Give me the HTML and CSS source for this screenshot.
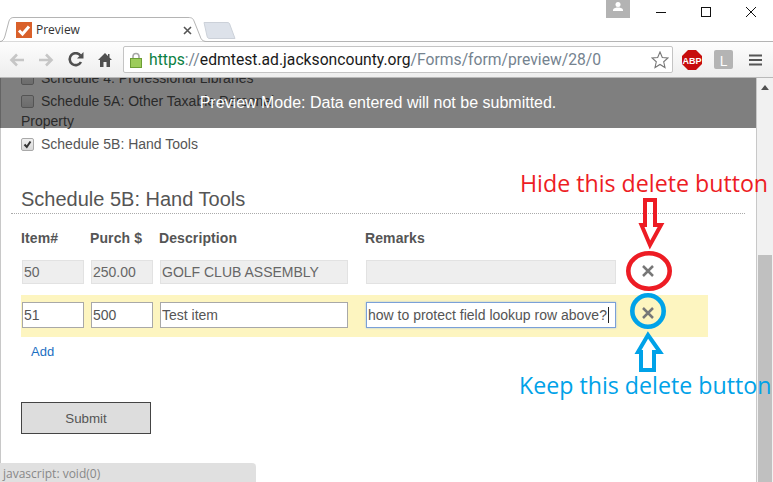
FILE: index.html
```html
<!DOCTYPE html>
<html lang="en">
<head>
<meta charset="utf-8">
<title>Preview</title>
<link rel="stylesheet" href="styles.css">
</head>
<body>
<div class="window">
  <header class="tabstrip">
    <div class="tab">
      <svg class="tab-shape" width="212" height="25" viewBox="0 0 212 25"><path d="M0 24.500H3C6 24.500 7 22 8 19L12 4C13 1.500 14 .5 17 .5H191C195 .5 196 1.500 197 4L203 19C204 22 205 24.500 210 24.500" fill="#fff" stroke="#b4b4b4"/></svg>
      <svg class="favicon" width="16" height="16" viewBox="0 0 16 16"><rect width="16" height="16" fill="#d9602a"/><path d="M3 8.500 6.500 12 13 4.500" fill="none" stroke="#fff" stroke-width="3"/></svg>
      <span class="tab-title">Preview</span>
      <svg class="tab-close" width="9" height="9" viewBox="0 0 9 9"><path d="M1 1 8 8M8 1 1 8" stroke="#555" stroke-width="1.600"/></svg>
    </div>
    <svg class="newtab" width="33" height="17" viewBox="0 0 33 17"><path d="M1 .5H24C26 .5 26.500 1 27 3L32 16.500H7C5 16.500 4.500 16 4 14Z" fill="#dde2ea" stroke="#ccd1d9"/></svg>
    <div class="spacer"></div>
    <div class="profile"><svg width="10" height="9" viewBox="0 0 10 9"><circle cx="5" cy="2.500" r="2.500" fill="#fff"/><path d="M0 9V7.500C1 6 3 5.500 5 5.500S9 6 10 7.500V9Z" fill="#fff"/></svg></div>
    <div class="winctl">
      <svg width="12" height="12" viewBox="0 0 12 12"><path d="M1 6.500H11" stroke="#111"/></svg>
      <svg width="12" height="12" viewBox="0 0 12 12"><rect x="1.500" y="1.500" width="9" height="9" fill="none" stroke="#111"/></svg>
      <svg width="12" height="12" viewBox="0 0 12 12"><path d="M1 1 11 11M11 1 1 11" stroke="#111"/></svg>
    </div>
  </header>

  <nav class="toolbar">
    <svg class="nav-icon" width="16" height="14" viewBox="0 0 16 14"><path d="M15 7H3M8 1.500 2.500 7 8 12.500" fill="none" stroke="#c6c6c6" stroke-width="2.600"/></svg>
    <svg class="nav-icon" width="16" height="14" viewBox="0 0 16 14"><path d="M1 7H13M8 1.500 13.500 7 8 12.500" fill="none" stroke="#c6c6c6" stroke-width="2.600"/></svg>
    <svg class="nav-icon" width="16" height="15" viewBox="0 0 16 15"><path d="M13 10A6 6 0 1 1 12.500 3.500" fill="none" stroke="#505050" stroke-width="2.600"/><path d="M9 6.500H15.500V0Z" fill="#505050"/></svg>
    <svg class="nav-icon" width="14" height="14" viewBox="0 0 14 14"><path d="M7 0 0 7H2V14H5.500V9H8.500V14H12V7H14L11.500 4.500V1H10V3Z" fill="#505050"/></svg>
    <div class="omnibox">
      <svg class="lock" width="12" height="16" viewBox="0 0 12 16"><path d="M3 7V4.500A3 3 0 0 1 9 4.500V7" fill="none" stroke="#a8a8a8" stroke-width="1.600"/><rect x=".5" y="6.500" width="11" height="9" fill="#9ccc5a" stroke="#6d9e35"/></svg>
      <span class="url"><span class="url-scheme">https</span><span class="url-dim">://</span><span class="url-host">edmtest.ad.jacksoncounty.org</span><span class="url-dim">/Forms/form/preview/28/0</span></span>
      <svg class="star" width="18" height="18" viewBox="0 0 18 18"><path d="M9 1 11.300 6.500 17 7 12.700 10.800 14 16.500 9 13.500 4 16.500 5.300 10.800 1 7 6.700 6.500Z" fill="#fff" stroke="#777" stroke-width="1.100"/></svg>
    </div>
    <svg class="ext-abp" width="20" height="20" viewBox="0 0 20 20"><path d="M6 0H14L20 6V14L14 20H6L0 14V6Z" fill="#c70d0d"/><text x="10" y="13.500" text-anchor="middle" class="abp-text">ABP</text></svg>
    <div class="ext-l">L</div>
    <svg class="menu" width="13" height="12" viewBox="0 0 13 12"><path d="M0 1.500H13M0 6H13M0 10.500H13" stroke="#555" stroke-width="2.200"/></svg>
  </nav>

  <main class="viewport">
    <div class="page">
      <div class="checks">
        <div class="check"><span class="box"></span><span>Schedule 4: Professional Libraries</span></div>
        <div class="check"><span class="box"></span><span class="check-wrap">Schedule 5A: Other Taxable Personal</span></div>
        <div class="check-rest">Property</div>
        <div class="check"><span class="box"><svg width="11" height="11" viewBox="0 0 11 11"><path d="M2.500 5.500 4.800 8 8.500 2.500" fill="none" stroke="#333" stroke-width="2"/></svg></span><span>Schedule 5B: Hand Tools</span></div>
      </div>

      <h2 class="section-title">Schedule 5B: Hand Tools</h2>

      <div class="grid grid-head">
        <div>Item#</div><div>Purch $</div><div>Description</div><div class="remarks-label">Remarks</div>
      </div>

      <div class="grid grid-locked">
        <input class="field locked" value="50" readonly>
        <input class="field locked" value="250.00" readonly>
        <input class="field locked" value="GOLF CLUB ASSEMBLY" readonly>
        <input class="field locked remarks" value="" readonly>
        <svg class="del" width="12" height="12" viewBox="0 0 12 12"><path d="M1 1 11 11M11 1 1 11" stroke="#777" stroke-width="2.500"/></svg>
      </div>

      <div class="grid grid-edit">
        <input class="field" value="51">
        <input class="field" value="500">
        <input class="field" value="Test item">
        <div class="remarks focus-field">how to protect field lookup row above?<span class="caret"></span></div>
        <svg class="del" width="12" height="12" viewBox="0 0 12 12"><path d="M1 1 11 11M11 1 1 11" stroke="#777" stroke-width="2.500"/></svg>
      </div>

      <a class="add" href="#">Add</a>
      <button class="submit" type="button">Submit</button>
    </div>
    <div class="scrollbar">
      <svg class="scroll-up" width="8" height="5" viewBox="0 0 8 5"><path d="M4 0 8 5H0Z" fill="#505050"/></svg>
      <div class="thumb"></div>
    </div>

    <div class="banner">Preview Mode: Data entered will not be submitted.</div>
    <div class="status">javascript: void(0)</div>
  </main>

  <div class="notes">
    <svg class="notes-art" width="773" height="482" viewBox="0 0 773 482">
      <path d="M645 200H655V225H661L650 245 641.500 225H645Z" fill="none" stroke="#ed1c24" stroke-width="4"/>
      <ellipse cx="649" cy="271" rx="20.700" ry="17.700" fill="none" stroke="#ed1c24" stroke-width="4.600"/>
      <circle cx="648" cy="311" r="15.700" fill="none" stroke="#00a2e8" stroke-width="4.600"/>
      <path d="M641 370H654V352H660L648 335 638 352H641Z" fill="none" stroke="#00a2e8" stroke-width="4"/>
    </svg>
    <span class="note note-hide">Hide this delete button</span>
    <span class="note note-keep">Keep this delete button</span>
  </div>
</div>
</body>
</html>
```
FILE: styles.css
```css
* { box-sizing: border-box; }
html, body { margin: 0; padding: 0; }
body { font-family: "Liberation Sans", Arial, sans-serif; background: #fff; }

.window {
  position: relative;
  width: 773px;
  height: 482px;
  overflow: hidden;
  display: flex;
  flex-direction: column;
  background: #fff;
}

/* Tab strip */
.tabstrip {
  height: 42px;
  flex: none;
  display: flex;
  align-items: flex-start;
  background: #fff;
  border-bottom: 1px solid #b4b4b4;
}
.tab {
  position: relative;
  width: 203px;
  height: 42px;
  flex: none;
  font-family: "Open Sans", sans-serif;
}
.tab-shape { position: absolute; left: -3px; top: 17px; }
.favicon { position: absolute; left: 16px; top: 22px; }
.tab-title { position: absolute; left: 36px; top: 21px; font-size: 12px; line-height: 18px; color: #333; }
.tab-close { position: absolute; left: 183px; top: 26px; }
.newtab { margin-top: 22px; flex: none; }
.spacer { flex: 1; }
.profile {
  width: 24px;
  height: 18px;
  background: #b3b3b3;
  display: flex;
  justify-content: center;
  padding-top: 2px;
  margin-right: 25px;
}
.winctl { display: flex; gap: 33px; padding: 6px 16px 0 0; }

/* Toolbar */
.toolbar {
  height: 36px;
  flex: none;
  display: flex;
  align-items: center;
  padding: 0 10px 0 9px;
  background: linear-gradient(#fdfdfd, #eeeeee);
  border-bottom: 1px solid #b9b9b9;
}
.nav-icon { flex: none; margin-right: 13px; }
.nav-icon:nth-child(3) { margin-left: 1px; margin-right: 14px; }
.omnibox {
  width: 550px;
  height: 27px;
  margin-left: -2px;
  flex: none;
  display: flex;
  align-items: center;
  background: #fff;
  border: 1px solid #c4c4c4;
  border-radius: 2px;
  padding: 0 3px 0 6px;
}
.lock { flex: none; margin-right: 7px; }
.url {
  flex: 1;
  font-family: Roboto, sans-serif;
  font-size: 15.700px;
  white-space: nowrap;
  overflow: hidden;
  color: #222;
}
.url-scheme { color: #0b8043; }
.url-dim { color: #75838f; }
.url-host { color: #1a1a1a; }
.star { flex: none; }
.ext-abp { flex: none; margin-left: 9px; }
.abp-text { font: bold 9px "Liberation Sans", sans-serif; fill: #fff; }
.ext-l {
  width: 19px;
  height: 19px;
  margin-left: 12px;
  flex: none;
  background: #b4b4b4;
  border-radius: 2px;
  color: #fff;
  font: 15px/21px "Open Sans", sans-serif;
  text-align: center;
}
.menu { flex: none; margin-left: 16px; }

/* Page area */
.viewport {
  position: relative;
  flex: 1;
  display: flex;
  min-height: 0;
  overflow: hidden;
}
.page {
  flex: 1;
  min-width: 0;
  border-left: 1px solid #c8c8c8;
  color: #555;
  font-size: 14px;
}
.checks { margin: -10px 0 0 20px; }
.check { display: flex; align-items: center; gap: 7px; line-height: 20px; margin-bottom: 3px; }
.check-rest { line-height: 20px; margin: -3px 0 3px; }
.box {
  width: 13px;
  height: 13px;
  flex: none;
  display: flex;
  align-items: center;
  justify-content: center;
  border: 1px solid #a9a9a9;
  border-radius: 2px;
  background: linear-gradient(#f0f0f0, #d8d8d8);
}
.section-title {
  margin: 32px 0 0 10px;
  padding: 0 0 1px 10px;
  width: 734px;
  font-size: 20px;
  font-weight: normal;
  line-height: 26px;
  color: #555;
  border-bottom: 1px dotted #aaa;
}
.grid {
  display: grid;
  grid-template-columns: 62px 62px 188px 261px 50px;
  column-gap: 7px;
  align-items: center;
  margin-left: 20px;
  width: 687px;
  padding-left: 1px;
}
.grid-head { margin-top: 14px; padding-left: 0; line-height: 20px; font-weight: bold; letter-spacing: .1px; }
.remarks-label { padding-left: 11px; }
.grid-locked { margin-top: 12px; }
.grid-locked .del { margin-bottom: 2px; }
.grid-edit { margin-top: 11px; height: 42px; padding-bottom: 2px; background: #fdf5c0; }
.grid-edit .del { margin-bottom: 4px; }
.field {
  display: block;
  width: 100%;
  height: 26px;
  padding: 0 1px;
  border: 1px solid #a8a8a8;
  background: #fff;
  color: #555;
  font: 14px "Liberation Sans", sans-serif;
  outline: none;
  border-radius: 0;
}
.field.locked { height: 24px; background: #eee; border-color: #e2e2e2; color: #666; }
.remarks { justify-self: end; width: 250px; }
.focus-field {
  height: 26px;
  padding: 0 1px;
  line-height: 24px;
  border: 1px solid #7aa0d8;
  box-shadow: 0 0 2px #a9c4ea;
  background: #fff;
  color: #555;
  white-space: nowrap;
  overflow: hidden;
}
.caret { display: inline-block; width: 1px; height: 16px; margin-left: 1px; background: #222; vertical-align: -3px; }
.del { justify-self: center; }
.add {
  display: block;
  margin: 5px 0 0 30px;
  width: max-content;
  font-size: 13px;
  line-height: 20px;
  color: #1b6fc2;
  text-decoration: none;
}
.submit {
  display: block;
  margin: 40px 0 0 20px;
  width: 130px;
  height: 32px;
  background: #ddd;
  border: 1px solid #444;
  color: #555;
  font: 13.330px "Liberation Sans", sans-serif;
}

/* Scrollbar */
.scrollbar {
  position: relative;
  width: 17px;
  flex: none;
  background: #f1f1f1;
  border-left: 1px solid #c8c8c8;
  display: flex;
  flex-direction: column;
  align-items: center;
  padding-top: 7px;
}
.thumb { width: 14px; height: 230px; margin-top: 165px; background: #c0c0c0; }

/* Overlays */
.banner {
  position: absolute;
  left: 0;
  top: 0;
  width: 756px;
  height: 50px;
  padding-top: 15px;
  background: rgba(0, 0, 0, .5);
  color: #fff;
  font-size: 16px;
  line-height: 20px;
  text-align: center;
}
.status {
  position: absolute;
  left: 0;
  bottom: 0;
  width: 256px;
  height: 19px;
  padding-left: 3px;
  background: #e0e0e0;
  border-top-right-radius: 4px;
  color: #888;
  font: 12px/22px "Open Sans", sans-serif;
}
.notes { position: absolute; inset: 0; pointer-events: none; }
.notes-art { position: absolute; left: 0; top: 0; }
.note {
  position: absolute;
  font-family: "Open Sans", sans-serif;
  font-size: 23.200px;
  line-height: 30px;
  white-space: nowrap;
}
.note-hide { left: 520px; top: 168px; color: #ed1c24; }
.note-keep { left: 519px; top: 370px; color: #00a2e8; }
```
